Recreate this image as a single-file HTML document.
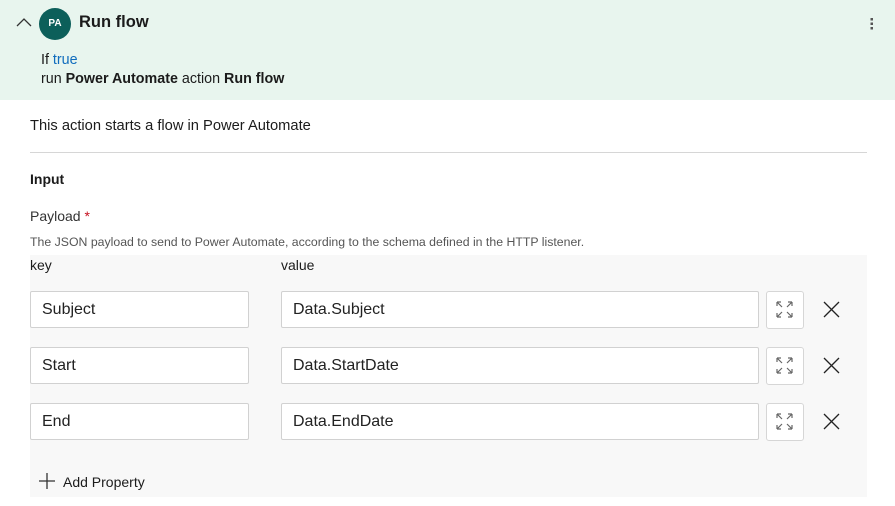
<!DOCTYPE html>
<html><head><meta charset="utf-8"><style>
*{box-sizing:border-box;margin:0;padding:0}
body{width:895px;height:506px;background:#fff;font-family:"Liberation Sans",Arial,sans-serif;color:#1b1b1b;position:relative;overflow:hidden}
.abs{position:absolute}
.hdr{left:0;top:0;width:895px;height:100px;background:#e8f5ee}
.avatar{left:39px;top:8px;width:32px;height:32px;border-radius:50%;background:#0c5f5a;color:#fff;font-size:10px;font-weight:bold;text-align:center;line-height:32px}
.inp{height:37px;border:1px solid #d1d1d1;border-radius:2px;background:#fff;font-size:16px;line-height:35px;padding-left:11px;color:#222}
.btn{width:38px;height:38px;border:1px solid #d6d6d6;border-radius:3px;background:#fff}
</style></head><body>
<div class="abs hdr"></div>
<svg class="abs" style="left:16px;top:17px" width="16" height="12"><path d="M1 9 L8 2 L15 9" stroke="#333" stroke-width="1.3" fill="none"/></svg>
<div class="abs avatar">PA</div>
<div class="abs" style="left:79px;top:13px;font-size:16.5px;font-weight:bold">Run flow</div>
<svg class="abs" style="left:869px;top:17px" width="6" height="14"><rect x="1.5" y="1" width="2.5" height="2.5" fill="#555"/><rect x="1.5" y="5.5" width="2.5" height="2.5" fill="#555"/><rect x="1.5" y="10" width="2.5" height="2.5" fill="#555"/></svg>
<div class="abs" style="left:41px;top:52px;font-size:14.3px">If <span style="color:#0f6cbd">true</span></div>
<div class="abs" style="left:41px;top:71px;font-size:14.3px">run <b>Power Automate</b> action <b>Run flow</b></div>
<div class="abs" style="left:30px;top:118px;font-size:14.7px">This action starts a flow in Power Automate</div>
<div class="abs" style="left:30px;top:152px;width:837px;height:1px;background:#d6d6d6"></div>
<div class="abs" style="left:30px;top:171px;font-size:14px;font-weight:bold">Input</div>
<div class="abs" style="left:30px;top:208px;font-size:14px;color:#333">Payload <span style="color:#c50f1f">*</span></div>
<div class="abs" style="left:30px;top:235px;font-size:12.3px;color:#555">The JSON payload to send to Power Automate, according to the schema defined in the HTTP listener.</div>
<div class="abs" style="left:30px;top:255px;width:837px;height:242px;background:#f8f8f8"></div>
<div class="abs" style="left:30px;top:257px;font-size:14px">key</div>
<div class="abs" style="left:281px;top:257px;font-size:14px">value</div>

<div class="abs inp" style="left:30px;top:291px;width:219px">Subject</div>
<div class="abs inp" style="left:281px;top:291px;width:478px">Data.Subject</div>
<div class="abs inp" style="left:30px;top:347px;width:219px">Start</div>
<div class="abs inp" style="left:281px;top:347px;width:478px">Data.StartDate</div>
<div class="abs inp" style="left:30px;top:403px;width:219px">End</div>
<div class="abs inp" style="left:281px;top:403px;width:478px">Data.EndDate</div>

<div class="abs btn" style="left:766px;top:291px"></div>
<div class="abs btn" style="left:766px;top:347px"></div>
<div class="abs btn" style="left:766px;top:403px"></div>
<svg class="abs" style="left:0;top:0" width="895" height="506">
<defs><g id="ex" stroke="#666" stroke-width="1.2" fill="none">
<path d="M0 0 L5 5 M0 0 h4 M0 0 v4"/><path d="M15 0 L10 5 M15 0 h-4 M15 0 v4"/><path d="M0 15 L5 10 M0 15 h4 M0 15 v-4"/><path d="M15 15 L10 10 M15 15 h-4 M15 15 v-4"/></g>
<g id="x" stroke="#222" stroke-width="1.3"><path d="M0 0 L15 15 M15 0 L0 15"/></g></defs>
<use href="#ex" x="777" y="302"/><use href="#ex" x="777" y="358"/><use href="#ex" x="777" y="414"/>
<use href="#x" x="824" y="302"/><use href="#x" x="824" y="358"/><use href="#x" x="824" y="414"/>
<path d="M39 481 h16 M47 473 v16" stroke="#333" stroke-width="1.3"/>
</svg>
<div class="abs" style="left:63px;top:474px;font-size:14px">Add Property</div>
</body></html>
